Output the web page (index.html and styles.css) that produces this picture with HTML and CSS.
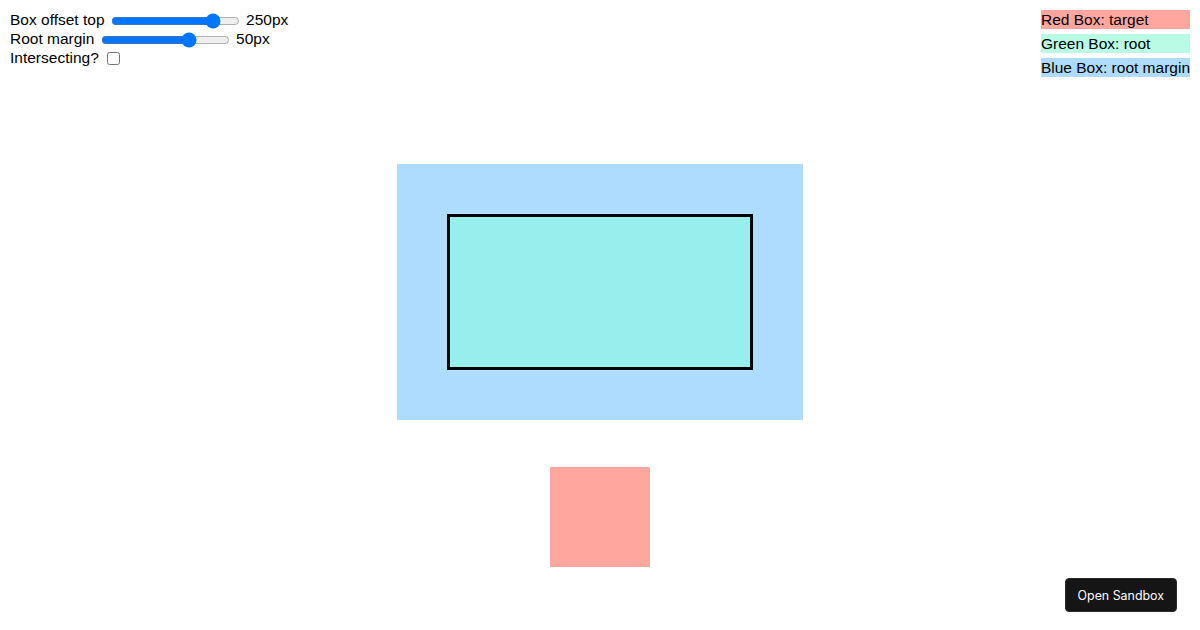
FILE: index.html
```html
<!DOCTYPE html>
<html>
<head>
<meta charset="utf-8">
<link rel="stylesheet" href="styles.css">
</head>
<body>
<div class="controls">
  <div class="row"><label>Box offset top <input type="range" min="0" max="300" value="250"> 250px</label></div>
  <div class="row"><label>Root margin <input type="range" min="0" max="70" value="50"> 50px</label></div>
  <div class="row"><label>Intersecting? <input type="checkbox"></label></div>
</div>
<div class="legend">
  <div class="item red">Red Box: target</div>
  <div class="item green">Green Box: root</div>
  <div class="item blue">Blue Box: root margin</div>
</div>
<div class="margin-box">
  <div class="root"></div>
</div>
<div class="target"></div>
<button class="sandbox">Open Sandbox</button>
</body>
</html>
```
FILE: styles.css
```css
html, body {
  margin: 0;
  background: #fff;
}
body {
  padding: 11px 10px 0 10px;
  font-family: "Liberation Sans", Arial, sans-serif;
  font-size: 15.5px;
  color: #000;
}
.controls .row {
  line-height: 18px;
}
.controls input[type="range"] {
  vertical-align: middle;
  margin: 1px 2px;
}
.controls input[type="checkbox"] {
  vertical-align: middle;
}
.legend {
  position: absolute;
  top: 10px;
  right: 10px;
  display: flex;
  flex-direction: column;
  gap: 5px;
}
.item {
  line-height: 19px;
}
.red { background: #ffa69e; }
.green { background: #b9fbe4; }
.blue { background: #aedcfe; }
.margin-box {
  width: 306px;
  height: 156px;
  padding: 50px;
  margin: 96px auto 0;
  background: #aedcfe;
}
.root {
  width: 300px;
  height: 150px;
  border: 3px solid #000;
  background: #98eeec;
}
.target {
  width: 100px;
  height: 100px;
  margin: 47px auto 0;
  background: #ffa69e;
}
.sandbox {
  position: fixed;
  right: 23px;
  bottom: 18px;
  height: 34px;
  padding: 0 12px;
  background: #151515;
  color: #fff;
  border: 1px solid #2a2a2a;
  border-radius: 4px;
  font-family: Inter, "Liberation Sans", sans-serif;
  font-size: 12.4px;
}
```
